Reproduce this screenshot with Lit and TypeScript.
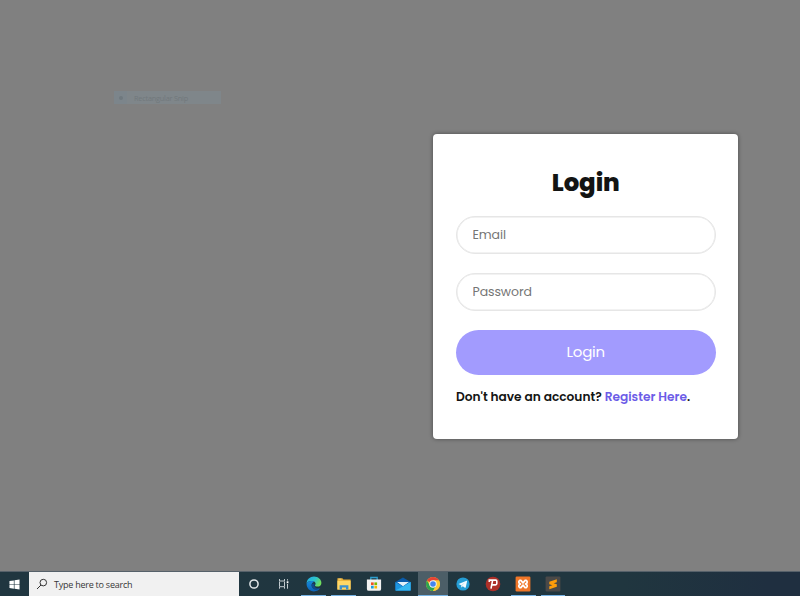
import { LitElement, html, css, svg } from "lit";
import { customElement } from "lit/decorators.js";
import { classMap } from "lit/directives/class-map.js";

const icons = {
  cortana: svg`<circle cx="8" cy="8" r="4.1" fill="none" stroke="#e4e8ea" stroke-width="1.500"/>`,
  tasks: svg`<path d="M3.500 3v2h5V3M3.500 12.700v-2h5v2M3.500 5.500v5M8.500 5.500v5M11.500 3.200v1.300M11.500 8v4.700" fill="none" stroke="#c3ccd0" stroke-width="1"/><path d="M10.700 5.300h1.700v1.900h-1.700z" fill="#fff"/>`,
  edge: svg`<defs><linearGradient id="eg" x1="0" y1="0" x2="1" y2=".5"><stop offset="0" stop-color="#22a9e6"/><stop offset=".55" stop-color="#2bc3ce"/><stop offset="1" stop-color="#72e05c"/></linearGradient><linearGradient id="eb" x1="0" y1="0" x2="0" y2="1"><stop offset="0" stop-color="#168adb"/><stop offset="1" stop-color="#0c62b7"/></linearGradient></defs>
    <path d="M.6 8C.6 3.400 4 .6 8 .6s7.400 2.900 7.400 6.300c0 2.300-1.800 3.700-3.800 3.700-1.700 0-2.600-.7-2.600-1.200 0-.4.6-.6.6-1.600 0-1.300-1.400-2.700-3.900-2.700C2.600 5.100.9 6.400.6 8z" fill="url(#eg)"/>
    <path d="M.6 8c.3-1.800 2.100-3 4.800-3 1.300 0 2.500.4 3.200 1-1.900-.2-3 1.400-3 3 0 2.600 2.300 4.300 4.900 4.300 1.500 0 2.700-.5 3.700-1.200C13 14.200 10.800 15.400 8 15.400 3.600 15.400.6 12 .6 8z" fill="url(#eb)"/>
    <path d="M5.700 8.200C5.100 11.700 7.500 13.700 10.300 13.700c1.600 0 2.900-.6 3.900-1.600-1 .3-3.500.6-5-.9-1-.9-1-2-.6-3.100-.8-.9-2.300-.8-2.900.1z" fill="#114a8b"/>`,
  folder: svg`<path d="M1.400 2.200h5l1 1.400h7.200V13.600H1.400z" fill="#e9aa2d"/><path d="M1.400 4.700h13.200v8.900H1.400z" fill="#ffd766"/><path d="M3.600 13.600V9.300h8.800v4.300H10v-2H6v2z" fill="#3c91d0"/><path d="M2.400 3.100h3" stroke="#fff0b4" stroke-width=".7"/>`,
  store: svg`<path d="M4.800 4.400V1.500h6.400v2.900" fill="none" stroke="#2d9fcf" stroke-width="1.300"/><path d="M.9 3.500h14.200v9.400q0 1.900-1.900 1.900H2.800Q.9 14.800.9 12.900z" fill="#f1f1f1"/><path d="M5 6.400h2.700v2.700H5z" fill="#f05023"/><path d="M8.400 6.400h2.700v2.700H8.400z" fill="#7eb900"/><path d="M5 9.800h2.700v2.700H5z" fill="#169fdf"/><path d="M8.400 9.800h2.700v2.700H8.400z" fill="#f7b600"/>`,
  mail: svg`<path d="M.4 6 8 1.500 15.600 6v8.500H.4z" fill="#0a5baa"/><path d="M2 5.900h12L8 10.300z" fill="#e2f1fa"/><path d="M.4 6 8 10.400 15.600 6v8.500H.4z" fill="#1d95df"/><path d="m.4 14.500 7.600-4.100L15.600 6v8.500z" fill="#35b8f1"/>`,
  chrome: svg`<circle cx="8" cy="8" r="7" fill="#fbc52d"/><path d="M8 8 1.940 4.500A7 7 0 0 1 14.060 4.500H8z" fill="#e54335"/><path d="M1.940 4.500A7 7 0 0 0 8 15L11.030 9.750 8 8 4.970 9.750z" fill="#2da450"/><path d="M8 4.500h6.060A7 7 0 0 1 8 15l3.030-5.250z" fill="#fcc934"/><circle cx="8" cy="8" r="3.700" fill="#f5f5f5"/><circle cx="8" cy="8" r="2.800" fill="#4285f0"/>`,
  telegram: svg`<circle cx="8" cy="8" r="6.600" fill="#259dd5"/><path d="m3.500 7.900 8.100-3.200c.4-.1.600.1.500.5l-1.400 6.200c-.1.500-.4.500-.8.300L7.800 10.200l-1.100 1.100c-.3.200-.5.100-.5-.3V9.300z" fill="#f5fbff"/><path d="m6.200 9.300 4-3.100-3.200 3.600-.4 1.400z" fill="#b6d8e8"/>`,
  psi: svg`<circle cx="8" cy="8" r="7.300" fill="#ad3029"/><path d="M4.300 6V4.100h6.500q1 0 1 1v2.500q0 1.300-1.300 1.300H7.400M7.600 4.300 6 12.700" fill="none" stroke="#fff" stroke-width="1.600"/>`,
  xampp: svg`<rect x=".6" y=".6" width="14.800" height="14.800" rx="1.200" fill="#ef7628"/><path d="M5.500 8 3.900 6.900V5.300l.9-.9h1.100L8 6.900l2.100-2.500h1.100l.9.900v1.600L10.500 8l1.600 1.100v1.600l-.9.900h-1.100L8 9.100l-2.100 2.500H4.800l-.9-.9V9.100z" fill="none" stroke="#fff" stroke-width="1.700" stroke-linejoin="round"/>`,
  sublime: svg`<rect x=".6" y=".6" width="14.800" height="14.800" rx="1" fill="#4a4948"/><path d="m4.300 5.700 7.500-2.400v3L8.700 7.300l3.100 1v2.500l-7.500 2.400v-3l3.100-1-3.100-1z" fill="#ff9d0a"/>`,
};

const tasks: { icon: keyof typeof icons; open?: boolean; active?: boolean }[] = [
  { icon: "cortana" },
  { icon: "tasks" },
  { icon: "edge", open: true },
  { icon: "folder", open: true },
  { icon: "store" },
  { icon: "mail" },
  { icon: "chrome", open: true, active: true },
  { icon: "telegram" },
  { icon: "psi" },
  { icon: "xampp", open: true },
  { icon: "sublime", open: true },
];

@customElement("login-card")
class LoginCard extends LitElement {
  static styles = css`
    :host {
      display: flex;
      flex-direction: column;
      box-sizing: border-box;
      width: 305px;
      height: 305px;
      padding: 30px 22.500px 0 23px;
      border-radius: 4px;
      background: #fff;
      box-shadow: 0 0 4px rgba(0, 0, 0, 0.42);
      font-family: Poppins, Inter, "Open Sans", sans-serif;
      color: #131413;
    }
    h1 {
      margin: 0 0 15px;
      font-size: 24.400px;
      line-height: 37.500px;
      font-weight: 800;
      text-align: center;
      letter-spacing: -0.05px;
    }
    input {
      display: block;
      box-sizing: border-box;
      width: 100%;
      height: 37.500px;
      margin: 0 0 19.500px;
      padding: 1px 15.500px 0;
      border: 1px solid #e6e6e6;
      border-radius: 19px;
      background: #fff;
      box-shadow: inset 0 0 0 0.5px #e6e6e6;
      font: 400 12.500px/20px Poppins, Inter, sans-serif;
      letter-spacing: -0.1px;
      outline: none;
    }
    input::placeholder {
      color: #757575;
      opacity: 1;
    }
    button {
      height: 44.500px;
      padding: 0;
      border: 0;
      border-radius: 23px;
      background: #a29bfe;
      color: #fff;
      font: 400 15px/24px Poppins, Inter, sans-serif;
      letter-spacing: -0.2px;
    }
    p {
      margin: 12px 0 0;
      font-size: 12.200px;
      line-height: 20px;
      font-weight: 600;
      letter-spacing: -0.01px;
      white-space: nowrap;
    }
    a { color: #6c5ce7; text-decoration: none; }
  `;
  render() {
    return html`
      <h1>Login</h1>
      <input type="text" placeholder="Email" />
      <input type="password" placeholder="Password" />
      <button>Login</button>
      <p>Don't have an account? <a>Register Here</a>.</p>
    `;
  }
}

@customElement("task-bar")
class TaskBar extends LitElement {
  static styles = css`
    :host {
      display: flex;
      box-sizing: border-box;
      height: 25px;
      border-top: 1px solid #56616a;
      background: linear-gradient(90deg, #203640 0%, #20363f 78%, #1f2f40 96%);
    }
    .start { display: grid; place-items: center; width: 29px; }
    .start svg { width: 11px; height: 11px; }
    .search {
      display: flex;
      align-items: center;
      gap: 6px;
      box-sizing: border-box;
      width: 210px;
      padding-left: 7px;
      background: #f1f1f1;
      color: #373737;
      font: 9px/14px "Segoe UI", "Open Sans", sans-serif;
      letter-spacing: -0.24px;
    }
    .search svg { width: 12px; height: 12px; }
    .search span { padding-top: 1px; }
    .slot {
      display: grid;
      position: relative;
      place-items: center;
      width: 29.920px;
    }
    .slot svg { width: 16px; height: 16px; }
    .active { background: #4c5e67; }
    .open::after {
      content: "";
      position: absolute;
      right: 2.500px;
      bottom: 0;
      left: 2.500px;
      height: 1.500px;
      background: #76b3e5;
    }
    .active::after { right: 0; left: 0; }
  `;
  render() {
    return html`
      <div class="start">
        <svg viewBox="0 0 12 12"><path d="M.5 2.200 5.300 1.500v4.200H.5zM6 1.400l5.500-.8v5.100H6zM.5 6.400h4.800v4.200L.5 9.900zM6 6.400h5.500v5.100L6 10.700z" fill="#fff"/></svg>
      </div>
      <div class="search">
        <svg viewBox="0 0 12 12"><circle cx="7.300" cy="4.600" r="3.300" fill="none" stroke="#333" stroke-width="1"/><path d="M5 7 1 11" stroke="#333" stroke-width="1"/></svg>
        <span>Type here to search</span>
      </div>
      ${tasks.map((t) => html`
        <div class=${classMap({ slot: true, open: !!t.open, active: !!t.active })}>
          <svg viewBox="0 0 16 16">${icons[t.icon]}</svg>
        </div>`)}
    `;
  }
}

@customElement("app-root")
class AppRoot extends LitElement {
  static styles = css`
    :host {
      display: flex;
      flex-direction: column;
      width: 800px;
      height: 596px;
      overflow: hidden;
      background: #808080;
    }
    main {
      display: flex;
      flex: 1;
      justify-content: space-between;
      align-items: flex-start;
      box-sizing: border-box;
      padding: 0 62px 0 114px;
    }
    login-card { margin-top: 133.500px; }
    .snip {
      display: flex;
      align-items: center;
      gap: 11px;
      box-sizing: border-box;
      width: 107px;
      height: 13px;
      margin-top: 91px;
      padding-left: 5px;
      background: linear-gradient(90deg, #7c858b 13px, #7f868a 13px);
      color: #71787c;
      font: 7.300px/12px "Segoe UI", "Open Sans", sans-serif;
      letter-spacing: -0.2px;
    }
    .dot { width: 4px; height: 4px; border-radius: 50%; background: #6f797f; }
  `;
  render() {
    return html`
      <main>
        <div class="snip"><i class="dot"></i><span>Rectangular Snip</span></div>
        <login-card></login-card>
      </main>
      <task-bar></task-bar>
    `;
  }
}
